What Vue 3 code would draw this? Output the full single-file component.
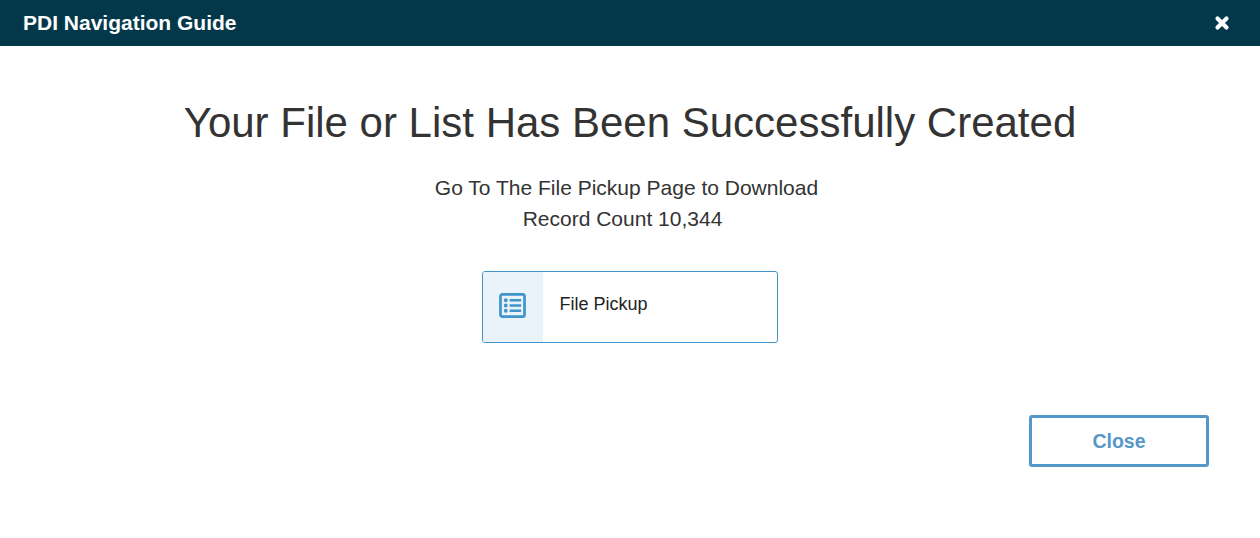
<template>
  <div class="modal">
    <!-- Header -->
    <div class="header">
      <span class="header-title">PDI Navigation Guide</span>
      <svg class="close-x" width="16" height="16" viewBox="0 0 16 16">
        <path d="M3.5 3.5 L12.5 12.5 M12.5 3.5 L3.5 12.5" stroke="#fff" stroke-width="4.2" stroke-linecap="round" />
      </svg>
    </div>

    <div class="body">
      <h1>Your File or List Has Been Successfully Created</h1>
      <p class="sub sub-first">Go To The File Pickup Page to Download</p>
      <p class="sub sub-second">Record Count {{ recordCount }}</p>

      <div class="pickup">
        <div class="pickup-icon">
          <svg width="27" height="25" viewBox="0 0 28 26">
            <rect x="1.5" y="1.5" width="25" height="23" rx="2" fill="none" stroke="#3f94cb" stroke-width="2.8" />
            <circle cx="7" cy="7.5" r="2" fill="#3f94cb" />
            <circle cx="7" cy="13" r="2" fill="#3f94cb" />
            <circle cx="7" cy="18.5" r="2" fill="#3f94cb" />
            <path d="M11 7.5 H23 M11 13 H23 M11 18.5 H23" stroke="#3f94cb" stroke-width="2.6" />
          </svg>
        </div>
        <span class="pickup-label">File Pickup</span>
      </div>

      <div class="footer">
        <button class="close-btn">Close</button>
      </div>
    </div>
  </div>
</template>

<script setup>
const recordCount = '10,344'
</script>

<style scoped>
.modal {
  width: 1260px;
  height: 538px;
  background: #fff;
  font-family: "Liberation Sans", Arial, sans-serif;
  color: #333;
  overflow: hidden;
}

.header {
  height: 46px;
  background: #03384b;
  display: flex;
  align-items: center;
  justify-content: space-between;
  padding: 0 30px 0 23px;
}

.header-title {
  color: #fff;
  font-size: 21px;
  font-weight: bold;
}

.body {
  display: flex;
  flex-direction: column;
  align-items: center;
}

h1 {
  margin: 52px 0 24px;
  font-size: 42px;
  line-height: 50px;
  font-weight: normal;
  text-align: center;
}

.sub {
  margin: 0;
  font-size: 21px;
  line-height: 31px;
  text-align: center;
}

.sub-first {
  padding-right: 7px;
}

.sub-second {
  padding-right: 15px;
}

.pickup {
  width: 296px;
  height: 72px;
  box-sizing: border-box;
  margin-top: 37px;
  border: 1px solid #3f94cb;
  border-radius: 3px;
  display: flex;
  overflow: hidden;
}

.pickup-icon {
  width: 60px;
  height: 100%;
  padding: 0 2px 3px 0;
  box-sizing: border-box;
  background: #eaf3fa;
  display: flex;
  align-items: center;
  justify-content: center;
}

.pickup-label {
  margin: 22px 0 0 16.5px;
  font-size: 18px;
  color: #222;
}

.footer {
  width: 100%;
  display: flex;
  justify-content: flex-end;
  padding-right: 51px;
  box-sizing: border-box;
  margin-top: 72px;
}

.close-btn {
  width: 180px;
  height: 52px;
  background: #fff;
  border: 3px solid #5597c9;
  border-radius: 3px;
  color: #5597c9;
  font-family: inherit;
  font-size: 19.5px;
  font-weight: bold;
  cursor: pointer;
}
</style>
